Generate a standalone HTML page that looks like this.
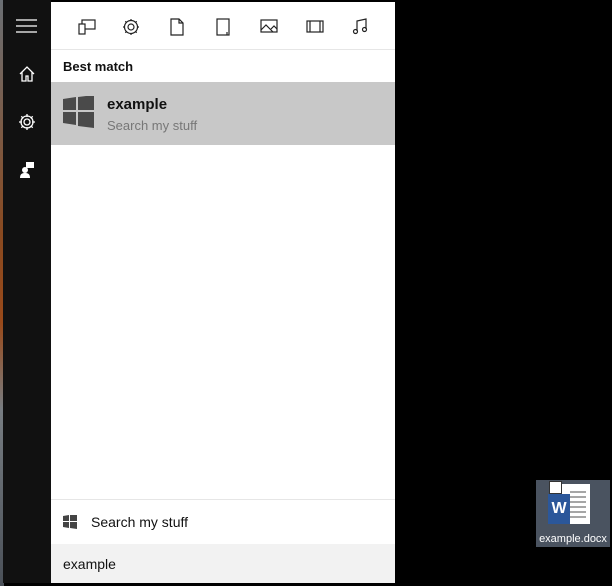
<!DOCTYPE html>
<html><head><style>
body{margin:0;width:612px;height:586px;background:#000;position:relative;overflow:hidden;font-family:"Liberation Sans",sans-serif}
.strip{position:absolute;left:0;top:0;width:4px;height:586px;background:linear-gradient(#6a6f74,#8a4a20 40%,#9a4a1a 55%,#777d82 70%,#4a5058)}
.side{position:absolute;left:3px;top:0;width:48px;height:583px;background:#111}
.panel{position:absolute;left:51px;top:2px;width:344px;height:581px;background:#fff}
.ic{position:absolute;stroke:#222;fill:none;stroke-width:1.2}
.wi{position:absolute;stroke:#fff;fill:none;stroke-width:1.3}
</style></head><body>
<div class="strip"></div>
<div class="side"></div>
<svg class="wi" style="left:16px;top:18px" width="22" height="16"><path d="M0 2h21M0 8h21M0 14h21"/></svg>
<svg class="wi" style="left:19px;top:66px" width="16" height="16"><path d="M1 8L8 1l7 7M3 6v9h4v-5h2v5h4V6"/></svg>
<svg class="wi" style="left:18px;top:113px" width="18" height="18"><circle cx="9" cy="9" r="3"/><path d="M9 1v3M9 14v3M1 9h3M14 9h3M3.3 3.3l2 2M12.7 12.7l2 2M3.3 14.7l2-2M12.7 5.3l2-2"/><circle cx="9" cy="9" r="6"/></svg>
<svg style="position:absolute;left:19px;top:161px" width="16" height="18"><rect x="7" y="1" width="8" height="6" fill="#fff"/><circle cx="6" cy="9" r="3" fill="#fff"/><path d="M1 17c0-4 2-5 5-5s5 1 5 5z" fill="#fff"/></svg>
<div class="panel">
<svg class="ic" style="left:27px;top:17px" width="18" height="16"><rect x="4" y="1" width="13" height="9"/><rect x="1" y="5" width="6" height="10" fill="#fff"/></svg>
<svg class="ic" style="left:71px;top:16px" width="18" height="18"><circle cx="9" cy="9" r="3"/><circle cx="9" cy="9" r="6.5"/><path d="M9 1v2M9 15v2M1 9h2M15 9h2M3.3 3.3l1.5 1.5M13.2 13.2l1.5 1.5M3.3 14.7l1.5-1.5M13.2 4.8l1.5-1.5"/></svg>
<svg class="ic" style="left:119px;top:16px" width="14" height="18"><path d="M1 1h8l4 4v12H1z M9 1v4h4"/></svg>
<svg class="ic" style="left:165px;top:16px" width="14" height="18"><rect x="1" y="1" width="12" height="16"/><path d="M11 14v3"/></svg>
<svg class="ic" style="left:209px;top:17px" width="18" height="15"><rect x="1" y="1" width="16" height="12"/><path d="M1 11l5-5 7 7M11 10l3-3 3 3"/></svg>
<svg class="ic" style="left:255px;top:18px" width="18" height="13"><rect x="1" y="1" width="16" height="11"/><path d="M4 1v11M14 1v11"/></svg>
<svg class="ic" style="left:301px;top:16px" width="16" height="17"><path d="M5 13V3l9-2v10"/><circle cx="3.5" cy="13.5" r="2"/><circle cx="12.5" cy="11.5" r="2"/></svg>
<div style="position:absolute;left:0;top:47px;width:344px;height:1px;background:#e6e6e6"></div>
<div style="position:absolute;left:12px;top:57px;font-size:13px;font-weight:bold;color:#111">Best match</div>
<div style="position:absolute;left:0;top:80px;width:344px;height:63px;background:#c8c8c8"></div>
<svg style="position:absolute;left:12px;top:94px" width="32" height="32"><path d="M0 3l13-2v13H0zM15 1l16-2v15H15zM0 16h13v13L0 27zM15 16h16v16l-16-2z" fill="#4a4a4a"/></svg>
<div style="position:absolute;left:56px;top:94px;font-size:15px;font-weight:bold;color:#111">example</div>
<div style="position:absolute;left:56px;top:116px;font-size:13px;color:#777">Search my stuff</div>
<div style="position:absolute;left:0;top:497px;width:344px;height:1px;background:#e6e6e6"></div>
<svg style="position:absolute;left:12px;top:513px" width="15" height="14"><path d="M0 1l6-1v6H0zM7 0l7-1v7H7zM0 7h6v6L0 12zM7 7h7v7l-7-1z" fill="#444"/></svg>
<div style="position:absolute;left:40px;top:512px;font-size:14px;color:#111">Search my stuff</div>
<div style="position:absolute;left:0;top:542px;width:344px;height:39px;background:#f2f2f2"></div>
<div style="position:absolute;left:12px;top:554px;font-size:14px;color:#111">example</div>
</div>
<div style="position:absolute;left:536px;top:480px;width:74px;height:67px;background:#4a5360"></div>
<div style="position:absolute;left:560px;top:484px;width:30px;height:40px;background:#fff"></div>
<svg style="position:absolute;left:570px;top:490px" width="18" height="30"><path d="M0 2h16M0 7h16M0 12h16M0 17h16M0 22h16M0 27h16" stroke="#888" stroke-width="1.5"/></svg>
<div style="position:absolute;left:548px;top:494px;width:22px;height:30px;background:#2b579a;color:#fff;font-weight:bold;font-size:16px;text-align:center;line-height:30px">W</div>
<div style="position:absolute;left:549px;top:481px;width:11px;height:11px;background:#fff;border:1px solid #333"></div>
<div style="position:absolute;left:536px;top:533px;width:74px;text-align:center;font-size:11px;color:#fff">example.docx</div>
</body></html>
